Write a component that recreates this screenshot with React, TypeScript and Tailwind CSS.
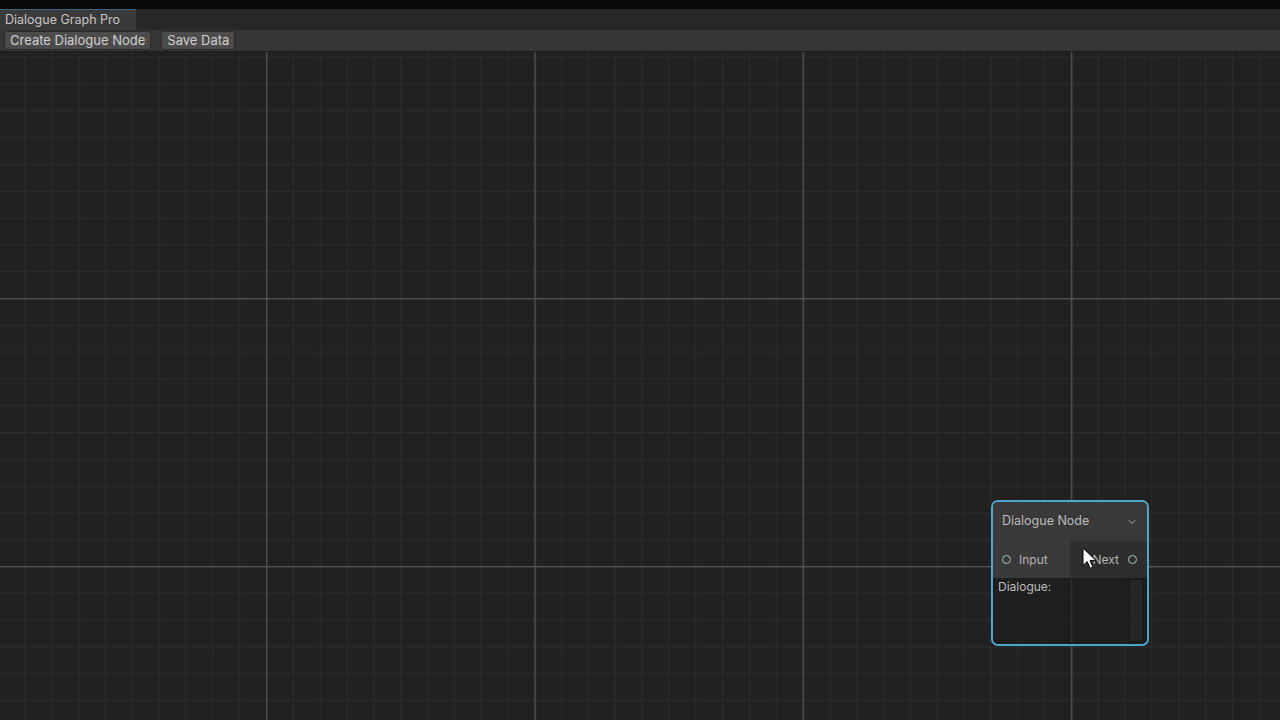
import { ChevronDown } from 'lucide-react';

// ----------------------------------------------------------------------------
// Grid canvas (drawn, not laid out)
// ----------------------------------------------------------------------------

function GridBackground() {
  return (
    <svg className="absolute inset-0 h-full w-full" xmlns="http://www.w3.org/2000/svg">
      <defs>
        <pattern id="minor" x={-2.3} y={-22} width={26.83} height={26.8} patternUnits="userSpaceOnUse">
          <rect x={0} y={0} width={1} height={26.8} fill="#2d2d2d" />
          <rect x={0} y={0} width={26.83} height={1} fill="#2d2d2d" />
        </pattern>
        <pattern id="major" x={-2.3} y={-22} width={268.3} height={268} patternUnits="userSpaceOnUse">
          <rect x={0} y={0} width={1.4} height={268} fill="#515151" />
          <rect x={0} y={0} width={268.3} height={1.4} fill="#515151" />
        </pattern>
      </defs>
      <rect width="100%" height="100%" fill="#212121" />
      <rect width="100%" height="100%" fill="url(#minor)" />
      <rect width="100%" height="100%" fill="url(#major)" />
    </svg>
  );
}

function Port() {
  return <span className="h-[9px] w-[9px] rounded-full border-[1.5px] border-[#a3c7b6]" />;
}

function DialogueNode() {
  return (
    <div className="absolute left-[991px] top-[448px] flex h-[146px] w-[158px] flex-col overflow-hidden rounded-[7px] border-2 border-[#4ea6c9] shadow-[inset_0_0_0_1px_#151515]">
      <div className="flex h-[39px] items-center justify-between bg-[#393939] pl-[9px] pr-[9px] text-[12.5px] text-[#bcbcbc]">
        <span>Dialogue Node</span>
        <ChevronDown size={12} strokeWidth={2} className="text-[#a8a8a8]" />
      </div>
      <div className="flex h-[37px]">
        <div className="flex w-[77px] items-center gap-[8px] bg-[#3a3a3a] pl-[9px] text-[12px] text-[#b5b5b5]">
          <Port />
          <span>Input</span>
        </div>
        <div className="flex flex-1 items-center justify-end gap-[9px] bg-[#2e2e2e] pr-[10px] text-[12px] text-[#b5b5b5]">
          <span>Next</span>
          <Port />
        </div>
      </div>
      <div className="flex flex-1 bg-[#1c1c1c]/60">
        <div className="flex-1 pl-[5px] text-[12px] text-[#bdbdbd]">Dialogue:</div>
        <div className="mr-[3px] mt-[1px] mb-[2px] w-[15px] rounded-[2px] border border-[#181818] bg-[#262626]" />
      </div>
    </div>
  );
}

function Cursor() {
  return (
    <svg className="absolute left-[1082px] top-[495px]" width="16" height="23" viewBox="0 0 16 23">
      <path d="M1 1 L1 18.5 L5.2 14.6 L8.2 21.3 L11 20 L8 13.6 L13.8 13.3 Z" fill="#ffffff" stroke="#000000" strokeWidth="1" strokeLinejoin="round" />
    </svg>
  );
}

// ----------------------------------------------------------------------------
// Window chrome
// ----------------------------------------------------------------------------

function ToolbarButton({ label }: { label: string }) {
  return (
    <button className="h-[19px] rounded-[3px] border border-[#2a2a2a] bg-[#4c4c4c] px-[5px] text-[13px] leading-none text-[#cfcfcf]">
      {label}
    </button>
  );
}

export default function App() {
  return (
    <div className="flex h-[720px] w-[1280px] flex-col overflow-hidden bg-[#212121] font-['Inter','Liberation_Sans',sans-serif]">
      <div className="h-[9px] bg-[#0a0a0a]" />
      <div className="flex h-[21px] bg-[#282828]">
        <div className="flex w-[136px] items-center border-t border-[#3f6584] bg-[#393939] pl-[5px] text-[12.5px] text-[#c6c6c6]">
          Dialogue Graph Pro
        </div>
      </div>
      <div className="flex h-[22px] items-center gap-[10px] border-b border-[#1b1b1b] bg-[#363636] pl-[4px]">
        <ToolbarButton label="Create Dialogue Node" />
        <ToolbarButton label="Save Data" />
      </div>
      <div className="relative flex-1">
        <GridBackground />
        <DialogueNode />
        <Cursor />
      </div>
    </div>
  );
}
